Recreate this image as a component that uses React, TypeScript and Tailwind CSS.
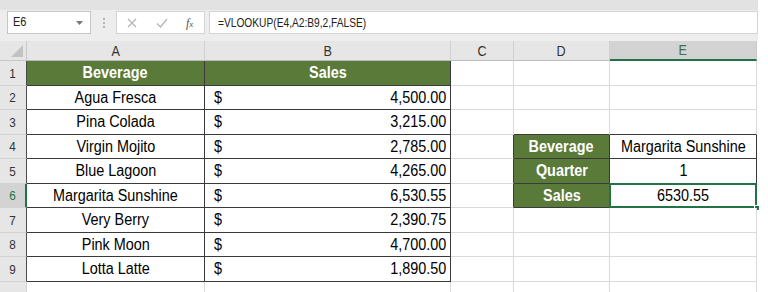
import React from "react";

const DARK = "border-[#3a3a3a]";
const LIGHT = "border-[#dadada]";
const GREEN_BG = "bg-[#5a7a3a]";

type Row = { name: string; amt: string };
const data: Row[] = [
  { name: "Agua Fresca", amt: "4,500.00" },
  { name: "Pina Colada", amt: "3,215.00" },
  { name: "Virgin Mojito", amt: "2,785.00" },
  { name: "Blue Lagoon", amt: "4,265.00" },
  { name: "Margarita Sunshine", amt: "6,530.55" },
  { name: "Very Berry", amt: "2,390.75" },
  { name: "Pink Moon", amt: "4,700.00" },
  { name: "Lotta Latte", amt: "1,890.50" },
];

const heights = [25, 24, 25, 24, 25, 24, 25, 24, 25];

function T({ children, origin = "origin-center", bold = false, white = false }: { children: React.ReactNode; origin?: string; bold?: boolean; white?: boolean }) {
  return (
    <span className={`inline-block scale-x-[0.9] ${origin} text-[16px] leading-none whitespace-nowrap ${bold ? "font-bold" : ""} ${white ? "text-white" : "text-black"}`}>
      {children}
    </span>
  );
}

function lookupD(r: number) {
  if (r === 4) return "Beverage";
  if (r === 5) return "Quarter";
  if (r === 6) return "Sales";
  return null;
}
function lookupE(r: number) {
  if (r === 4) return "Margarita Sunshine";
  if (r === 5) return "1";
  if (r === 6) return "6530.55";
  return null;
}

export default function App() {
  return (
    <div className="w-[768px] h-[292px] overflow-hidden bg-white font-['Liberation_Sans',Arial,sans-serif] select-none">
      {/* top strip */}
      <div className="w-[758px] h-[10px] bg-[#e2e2e2]" />
      {/* formula bar */}
      <div className="w-[758px] h-[31px] bg-[#ededed] flex items-start pt-[1px]">
        <div className="ml-[7px] w-[84px] h-[23px] bg-white border border-[#c6c6c6] flex items-center justify-between px-[5px]">
          <span className="inline-block scale-x-[0.88] origin-left text-[12.5px] text-[#222]">E6</span>
          <svg width="7" height="4" viewBox="0 0 7 4" className="mr-[2px]"><path d="M0 0h7L3.5 4z" fill="#777" /></svg>
        </div>
        <div className="w-[25px] h-[23px] flex flex-col items-center justify-center gap-[2px]">
          <span className="w-[2px] h-[2px] bg-[#b5b5b5]" />
          <span className="w-[2px] h-[2px] bg-[#b5b5b5]" />
          <span className="w-[2px] h-[2px] bg-[#b5b5b5]" />
        </div>
        <div className="w-[89px] h-[23px] bg-white border border-[#d4d4d4] flex items-center">
          <svg width="10" height="10" viewBox="0 0 10 10" className="ml-[10px]"><path d="M1 1L9 9M9 1L1 9" stroke="#b4b4b4" strokeWidth="1.2" /></svg>
          <svg width="12" height="10" viewBox="0 0 12 10" className="ml-[19px]"><path d="M1 5.5L4.5 9L11 1" stroke="#b4b4b4" strokeWidth="1.2" fill="none" /></svg>
          <span className="ml-[18px] text-[12px] italic text-[#555] font-['Liberation_Serif',serif]">f<span className="text-[9px]">x</span></span>
        </div>
        <div className="ml-[4px] flex-1 h-[23px] bg-white border border-[#d4d4d4] flex items-center pl-[8px]">
          <span className="inline-block scale-x-[0.85] origin-left text-[12px] text-[#222] whitespace-nowrap">=VLOOKUP(E4,A2:B9,2,FALSE)</span>
        </div>
      </div>
      {/* column headers */}
      <div className="grid grid-cols-[27px_178px_246px_63px_96px_147px_1fr] h-[20px]">
        <div className="bg-[#e6e6e6] border-r border-b border-[#c8c8c8] relative">
          <svg width="12" height="12" viewBox="0 0 12 12" className="absolute right-[3px] bottom-[3px]"><path d="M12 0V12H0z" fill="#c2c2c2" /></svg>
        </div>
        {["A", "B", "C", "D"].map((c) => (
          <div key={c} className="bg-[#e6e6e6] border-r border-b border-r-[#d0d0d0] border-b-[#bcbcbc] flex items-center justify-center">
            <span className="inline-block scale-x-[0.9] text-[14px] text-[#333] leading-none">{c}</span>
          </div>
        ))}
        <div className="bg-[#d3d3d3] border-r border-r-[#c8c8c8] border-b-2 border-b-[#217346] flex items-center justify-center">
          <span className="inline-block scale-x-[0.9] text-[14px] text-[#3f6f4d] leading-none">E</span>
        </div>
        <div className="bg-white" />
      </div>
      {/* rows */}
      {heights.map((h, i) => {
        const r = i + 1;
        const inLookup = r >= 4 && r <= 6;
        const d = lookupD(r);
        const e = lookupE(r);
        return (
          <div key={r} className="grid grid-cols-[27px_178px_246px_63px_96px_147px_1fr]" style={{ height: h }}>
            <div
              className={`${r === 6 ? "bg-[#d3d3d3] border-r-2 border-r-[#217346]" : "bg-[#e6e6e6] border-r border-r-[#4a4a4a]"} border-b border-b-[#d2d2d2] flex items-center justify-center`}
            >
              <span className={`inline-block scale-x-[0.9] text-[13px] leading-none ${r === 6 ? "text-[#217346]" : "text-[#333]"}`}>{r}</span>
            </div>
            {r === 1 ? (
              <>
                <div className={`${GREEN_BG} border-r border-b ${DARK} flex items-center justify-center`}>
                  <T bold white>Beverage</T>
                </div>
                <div className={`${GREEN_BG} border-r border-b ${DARK} flex items-center justify-center`}>
                  <T bold white>Sales</T>
                </div>
              </>
            ) : (
              <>
                <div className={`bg-white border-r border-b ${DARK} flex items-center justify-center`}>
                  <T>{data[i - 1].name}</T>
                </div>
                <div className={`bg-white border-r border-b ${DARK} flex items-center justify-between pl-[9px] pr-[4px]`}>
                  <T origin="origin-left">$</T>
                  <T origin="origin-right">{data[i - 1].amt}</T>
                </div>
              </>
            )}
            <div className={`bg-white border-b ${LIGHT} border-r ${inLookup ? "border-r-[#3a3a3a]" : "border-r-[#dadada]"}`} />
            <div
              className={`${inLookup ? GREEN_BG : "bg-white"} border-r border-b ${inLookup ? "border-r-[#3a3a3a]" : "border-r-[#dadada]"} ${r >= 3 && r <= 6 ? "border-b-[#3a3a3a]" : "border-b-[#dadada]"} flex items-center justify-center`}
            >
              {d && <T bold white>{d}</T>}
            </div>
            <div
              className={`relative bg-white border-r border-b ${inLookup ? "border-r-[#3a3a3a]" : "border-r-[#dadada]"} ${r >= 3 && r <= 6 ? "border-b-[#3a3a3a]" : "border-b-[#dadada]"} flex items-center justify-center`}
            >
              {e && <T>{e}</T>}
              {r === 6 && (
                <>
                  <div className="absolute -left-px -top-px -right-px -bottom-px border-2 border-[#217346]" />
                  <div className="absolute -right-[4px] -bottom-[4px] w-[6px] h-[6px] bg-[#217346] border border-white" />
                </>
              )}
            </div>
            <div className="bg-white" />
          </div>
        );
      })}
      {/* partial row 10 */}
      <div className="grid grid-cols-[27px_178px_246px_63px_96px_147px_1fr] h-[10px]">
        <div className="bg-[#e6e6e6] border-r border-r-[#d2d2d2]" />
        <div className="border-r border-r-[#dadada]" />
        <div className="border-r border-r-[#dadada]" />
        <div className="border-r border-r-[#dadada]" />
        <div className="border-r border-r-[#dadada]" />
        <div className="border-r border-r-[#dadada]" />
        <div />
      </div>
    </div>
  );
}
